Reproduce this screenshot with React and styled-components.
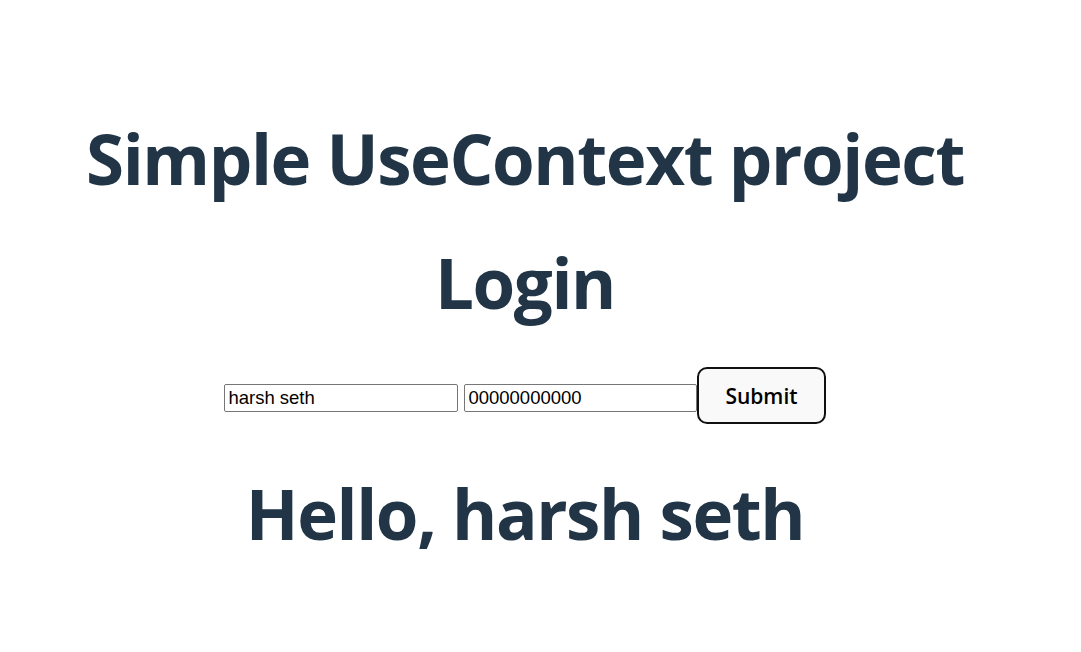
import React, { useState } from "react";
import styled, { createGlobalStyle } from "styled-components";

const GlobalStyle = createGlobalStyle`
  html, body {
    margin: 0;
    padding: 0;
    background: #ffffff;
  }
  body {
    font-family: "Open Sans", "Noto Sans", sans-serif;
    color: #213547;
  }
`;

const Page = styled.div`
  width: 1050px;
  padding-top: 120px;
  text-align: center;
`;

const Heading = styled.h1`
  margin: 0 0 47px;
  font-size: 69px;
  line-height: 77px;
  font-weight: 700;
  color: #213547;
  letter-spacing: -1.4px;
`;

const Form = styled.form`
  display: flex;
  justify-content: center;
  align-items: baseline;
  margin: -1px 0 51px;
`;

const TextInput = styled.input`
  box-sizing: border-box;
  width: ${({ $w }) => $w}px;
  height: 28px;
  margin-right: ${({ $gap }) => $gap}px;
  padding: 1px 3px;
  border: 1px solid #767676;
  border-radius: 2px;
  font-family: "Liberation Sans", Arial, sans-serif;
  font-size: 18.5px;
  color: #000000;
  background: #ffffff;
  outline: none;
`;

const SubmitButton = styled.button`
  box-sizing: border-box;
  height: 57px;
  padding: 0 26px;
  border: 2px solid #101010;
  border-radius: 10px;
  background: #f9f9f9;
  font-family: "Open Sans", "Noto Sans", sans-serif;
  font-size: 21px;
  font-weight: 600;
  color: #000000;
  cursor: pointer;
`;

export default function App() {
  const [name, setName] = useState("harsh seth");
  const [phone, setPhone] = useState("00000000000");
  const [user, setUser] = useState("harsh seth");

  const handleSubmit = (e) => {
    e.preventDefault();
    setUser(name);
  };

  return (
    <>
      <GlobalStyle />
      <Page>
        <Heading>Simple UseContext project</Heading>
        <Heading>Login</Heading>
        <Form onSubmit={handleSubmit}>
          <TextInput
            $w={234}
            $gap={6}
            type="text"
            value={name}
            onChange={(e) => setName(e.target.value)}
          />
          <TextInput
            $w={233}
            $gap={0}
            type="text"
            value={phone}
            onChange={(e) => setPhone(e.target.value)}
          />
          <SubmitButton type="submit">Submit</SubmitButton>
        </Form>
        <Heading>Hello, {user}</Heading>
      </Page>
    </>
  );
}
